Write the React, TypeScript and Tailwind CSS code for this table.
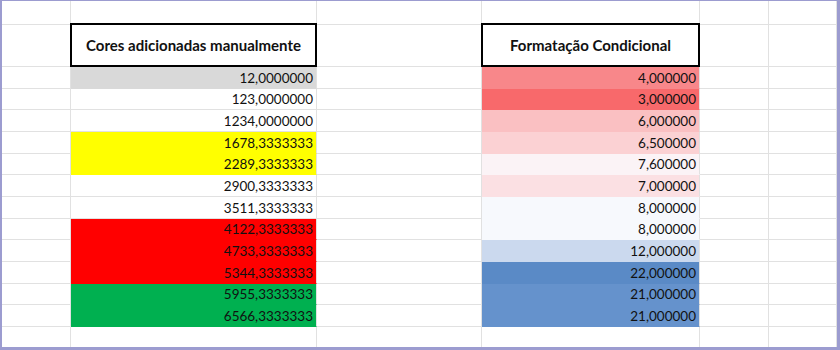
const rowHeights = [22, 21, 22, 22, 21, 22, 22, 21, 22, 22, 21, 22]

const left: [string, string][] = [
  ['12,0000000', '#d9d9d9'],
  ['123,0000000', ''],
  ['1234,0000000', ''],
  ['1678,3333333', '#ffff00'],
  ['2289,3333333', '#ffff00'],
  ['2900,3333333', ''],
  ['3511,3333333', ''],
  ['4122,3333333', '#ff0000'],
  ['4733,3333333', '#ff0000'],
  ['5344,3333333', '#ff0000'],
  ['5955,3333333', '#00b050'],
  ['6566,3333333', '#00b050'],
]

const right: [string, string][] = [
  ['4,000000', '#f8878a'],
  ['3,000000', '#f8696b'],
  ['6,000000', '#fac0c2'],
  ['6,500000', '#fbd1d3'],
  ['7,600000', '#fbf3f6'],
  ['7,000000', '#fbe0e3'],
  ['8,000000', '#f7f9fd'],
  ['8,000000', '#f7f9fd'],
  ['12,000000', '#cbd9ee'],
  ['22,000000', '#5a8ac6'],
  ['21,000000', '#6592cc'],
  ['21,000000', '#6592cc'],
]

const Cell = ({ text, fill }: { text?: string; fill?: string }) => (
  <div
    className="flex items-end justify-end border-r border-b border-r-[#e1e1e1] border-b-[#e1e1e1] pr-[3px] pb-[3px] text-[13.5px] leading-none text-[#111]"
    style={fill ? { backgroundColor: fill, borderBottomColor: fill } : undefined}
  >
    {text}
  </div>
)

const Header = ({ title }: { title: string }) => (
  <div className="relative border-r border-b border-[#e1e1e1]">
    <div className="absolute -left-px -top-[2px] -right-px -bottom-px flex items-center justify-center border-2 border-black bg-white pt-[1px] text-[15px] font-bold text-[#111]">
      {title}
    </div>
  </div>
)

export default function App() {
  return (
    <div className="h-[350px] w-[840px] overflow-hidden bg-white" style={{ fontFamily: 'Lato, "Liberation Sans", sans-serif' }}>
      <div className="h-[350px] border-l-2 border-t border-r-[3px] border-b-[3px] border-[#9c9cd0]">
        <div className="grid grid-cols-[69px_246px_165px_218px_69px_68px]">
          {[0, 1, 2, 3, 4, 5].map((i) => (
            <div key={i} className="h-[24px] border-r border-b border-[#e1e1e1]" />
          ))}
        </div>
        <div className="grid h-[42px] grid-cols-[69px_246px_165px_218px_69px_68px]">
          <Cell />
          <Header title="Cores adicionadas manualmente" />
          <Cell />
          <Header title="Formatação Condicional" />
          <Cell />
          <Cell />
        </div>
        {rowHeights.map((h, i) => (
          <div key={i} className="grid grid-cols-[69px_246px_165px_218px_69px_68px]" style={{ height: h }}>
            <Cell />
            <Cell text={left[i][0]} fill={left[i][1]} />
            <Cell />
            <Cell text={right[i][0]} fill={right[i][1]} />
            <Cell />
            <Cell />
          </div>
        ))}
        <div className="grid h-[20px] grid-cols-[69px_246px_165px_218px_69px_68px]">
          {[0, 1, 2, 3, 4, 5].map((i) => (
            <div key={i} className="border-r border-[#e1e1e1]" />
          ))}
        </div>
      </div>
    </div>
  )
}
